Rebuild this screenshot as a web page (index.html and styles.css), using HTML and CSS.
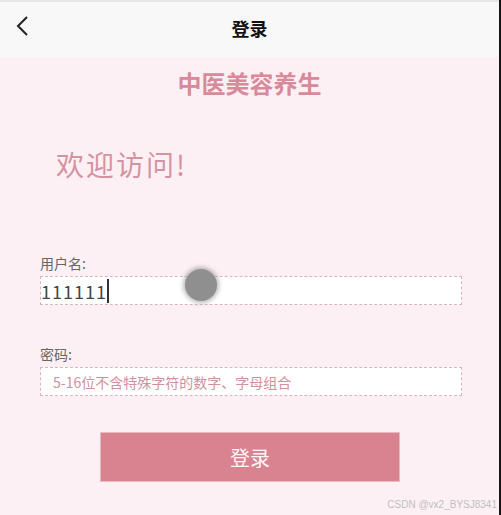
FILE: index.html
```html
<!DOCTYPE html>
<html>
<head>
  <meta name="viewport" content="width=device-width, initial-scale=1.0">
  <link rel="stylesheet" href="styles.css">
</head>
<body>
  <div class="phone">
    <div class="nav-bar">
      <span class="back">
        <svg width="14" height="22" viewBox="0 0 14 22"><path d="M12 2 L3 11 L12 20" fill="none" stroke="#222" stroke-width="2"/></svg>
      </span>
      <span class="nav-title">登录</span>
    </div>

    <div class="page">
      <div class="brand">中医美容养生</div>
      <div class="welcome">欢迎访问!</div>

      <div class="form">
        <div class="field">
          <label class="label">用户名:</label>
          <div class="input-box">
            <span class="value">111111</span><span class="caret"></span>
            <span class="touch"></span>
          </div>
        </div>

        <div class="field">
          <label class="label">密码:</label>
          <div class="input-box">
            <span class="placeholder">5-16位不含特殊字符的数字、字母组合</span>
          </div>
        </div>

        <div class="btn-row">
          <button class="login-btn">登录</button>
        </div>
      </div>

      <div class="mark">CSDN @vx2_BYSJ8341</div>
    </div>
  </div>
</body>
</html>
```

FILE: styles.css
```css
* {
  margin: 0;
  padding: 0;
  box-sizing: border-box;
  font-family: 'Noto Sans CJK SC', 'Noto Sans', sans-serif;
}

body {
  width: 501px;
  height: 515px;
  background: #151515;
  overflow: hidden;
}

.phone {
  width: 499px;
  height: 515px;
  display: flex;
  flex-direction: column;
  background: #fdf0f4;
}

.nav-bar {
  height: 57px;
  background: #f8f8f8;
  border-top: 2px solid #e6e6e6;
  position: relative;
  display: flex;
  justify-content: center;
  align-items: center;
}

.back {
  position: absolute;
  left: 15px;
  top: 13px;
}

.nav-title {
  font-size: 18px;
  font-weight: bold;
  color: #111;
  margin-top: -4px;
}

.page {
  flex: 1;
  display: flex;
  flex-direction: column;
  position: relative;
}

.brand {
  text-align: center;
  font-size: 24px;
  font-weight: bold;
  color: #d98a9a;
  line-height: 32px;
  margin-top: 10px;
}

.welcome {
  font-size: 28px;
  font-weight: 400;
  color: #d593a1;
  line-height: 40px;
  letter-spacing: 2px;
  margin-top: 45px;
  padding-left: 56px;
}

.form {
  padding: 0 37px 0 40px;
  margin-top: 69px;
}

.field {
  margin-bottom: 39px;
}

.field + .field {
  margin-bottom: 36px;
}

.label {
  display: block;
  font-size: 14px;
  color: #666;
  line-height: 20px;
  margin-bottom: 3px;
}

.input-box {
  position: relative;
  height: 29px;
  background: #fff;
  border: 1px dashed #dcb3be;
  display: flex;
  align-items: center;
}

.value {
  font-size: 18px;
  color: #444;
  letter-spacing: 1px;
}

.caret {
  width: 2px;
  height: 24px;
  background: #333;
}

.placeholder {
  padding-left: 12px;
  font-size: 14px;
  color: #d3909e;
}

.touch {
  position: absolute;
  left: 144px;
  top: -8px;
  width: 32px;
  height: 32px;
  border-radius: 50%;
  background: #8f8f8f;
  box-shadow: 0 0 4px 2px rgba(140, 140, 140, 0.6);
}

.btn-row {
  display: flex;
  padding-left: 60px;
}

.login-btn {
  width: 300px;
  height: 50px;
  border: 1px solid #ecb8c2;
  background: #d8838f;
  color: #fff5f7;
  font-size: 20px;
  font-family: 'Noto Sans CJK SC', sans-serif;
}

.mark {
  position: absolute;
  right: 2px;
  bottom: 5px;
  font-size: 10px;
  font-family: 'Liberation Sans', sans-serif;
  color: #c0c0c0;
}
```
